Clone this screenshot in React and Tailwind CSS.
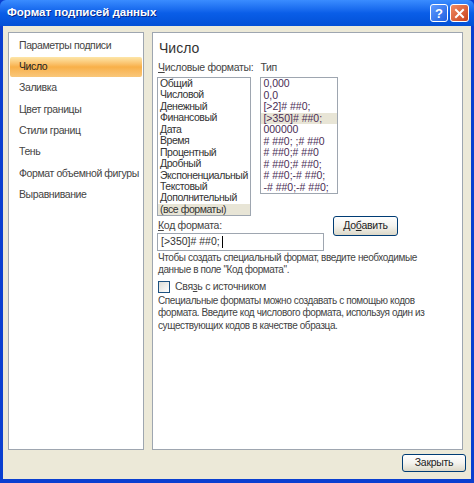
import React from "react";

const font = { fontFamily: '"Liberation Sans", Arial, sans-serif' };

const leftItems = [
  "Параметры подписи",
  "Число",
  "Заливка",
  "Цвет границы",
  "Стили границ",
  "Тень",
  "Формат объемной фигуры",
  "Выравнивание",
];

const categories = [
  "Общий",
  "Числовой",
  "Денежный",
  "Финансовый",
  "Дата",
  "Время",
  "Процентный",
  "Дробный",
  "Экспоненциальный",
  "Текстовый",
  "Дополнительный",
  "(все форматы)",
];

const types = [
  "0,000",
  "0,0",
  "[>2]# ##0;",
  "[>350]# ##0;",
  "000000",
  "# ##0; ;# ##0",
  "# ##0;# ##0",
  "# ##0;# ##0;",
  "# ##0;-# ##0;",
  "-# ##0;-# ##0;",
];

function XpButton({ children, className = "" }) {
  return (
    <div
      className={
        "flex items-center justify-center rounded-[3px] border border-[#003c74] bg-gradient-to-b from-[#ffffff] via-[#f4f3ee] to-[#dcd8c8] text-[10.5px] tracking-[-0.3px] text-[#222] whitespace-nowrap " +
        className
      }
    >
      {children}
    </div>
  );
}

export default function App() {
  return (
    <div
      className="w-[474px] h-[483px] bg-[#0a3fd0] flex flex-col overflow-hidden"
      style={font}
    >
      {/* Title bar */}
      <div className="h-[26px] shrink-0 flex items-center pl-[7px] pr-[5px] bg-gradient-to-b from-[#3a8cff] via-[#0a5ee8] to-[#0350d6] rounded-t-[6px]">
        <div className="text-white font-bold text-[11.5px] [text-shadow:1px_1px_0_#0b2a8a] flex-1 whitespace-nowrap">
          Формат подписей данных
        </div>
        <div className="flex gap-[2px] items-center">
          <div className="w-[18px] h-[18px] rounded-[3px] border border-white bg-gradient-to-br from-[#5f9bff] to-[#1f5fe0] flex items-center justify-center text-white font-bold text-[13px] leading-none">
            ?
          </div>
          <div className="w-[19px] h-[18px] rounded-[3px] border border-white bg-gradient-to-br from-[#f08a62] to-[#c8401a] flex items-center justify-center">
            <svg width="11" height="11" viewBox="0 0 11 11">
              <path d="M2 2 L9 9 M9 2 L2 9" stroke="white" strokeWidth="2" strokeLinecap="square" />
            </svg>
          </div>
        </div>
      </div>

      {/* Body */}
      <div className="flex-1 mx-[3px] mb-[4px] bg-[#ece9d8] flex flex-col pl-[5px] pr-[5px] pt-[6px]">
        <div className="flex gap-[8px] h-[418px]">
          {/* Left panel */}
          <div className="w-[136px] h-full bg-white border border-[#9ea6b0] pt-[2px] text-[10.5px] tracking-[-0.4px] text-[#444] whitespace-nowrap">
            {leftItems.map((it, i) => (
              <div key={it} className="h-[21.3px] flex items-center">
                {i === 1 ? (
                  <div className="mx-[1px] w-full h-[20px] flex items-center pl-[9px] rounded-[2px] bg-gradient-to-b from-[#fde6a8] via-[#f8b048] to-[#f9c77a] text-[#222]">
                    {it}
                  </div>
                ) : (
                  <div className="pl-[10px]">{it}</div>
                )}
              </div>
            ))}
          </div>

          {/* Right panel */}
          <div className="w-[311px] h-full bg-white border border-[#9ea6b0] pl-[4px] pt-[6px] text-[10.5px] tracking-[-0.3px] text-[#444] whitespace-nowrap">
            <div className="text-[14px] tracking-normal leading-[18px] text-[#333] pl-[2px]">Число</div>

            <div className="flex gap-[7px] mt-[4px]">
              <div className="flex flex-col">
                <div className="leading-[12px] pl-[1px]">
                  <span className="underline">Ч</span>исловые форматы:
                </div>
                <div className="mt-[4px] w-[94px] h-[139px] border border-[#9ea6b0] text-[#333] tracking-[-0.45px]">
                  {categories.map((c, i) => (
                    <div
                      key={c}
                      className={
                        "h-[11.45px] leading-[11.45px] pl-[2px] whitespace-nowrap " +
                        (i === 11 ? "bg-[#e8e5d6]" : "")
                      }
                    >
                      {c}
                    </div>
                  ))}
                </div>
              </div>
              <div className="flex flex-col">
                <div className="leading-[12px] pl-[0px]">Тип</div>
                <div className="mt-[4px] w-[78px] h-[117px] border border-[#9ea6b0] text-[#4a2c55] tracking-normal">
                  {types.map((t, i) => (
                    <div
                      key={t}
                      className={
                        "h-[11.5px] leading-[11.5px] pl-[2px] whitespace-pre " +
                        (i === 3 ? "bg-[#e8e5d6]" : "")
                      }
                    >
                      {t}
                    </div>
                  ))}
                </div>
              </div>
            </div>

            <div className="flex mt-[3px]">
              <div className="flex flex-col">
                <div className="leading-[12px] pl-[1px]">
                  <span className="underline">К</span>од формата:
                </div>
                <div className="mt-[2px] w-[167px] h-[18px] border border-[#9ea6b0] flex items-center pl-[3px] text-[#333] whitespace-pre tracking-normal">
                  [&gt;350]# ##0;
                  <span className="inline-block w-[1px] h-[12px] bg-black ml-[2px]" />
                </div>
              </div>
              <XpButton className="ml-[9px] w-[65px] h-[20px] mt-[-3px]">
                До<span className="underline">б</span>авить
              </XpButton>
            </div>

            <div className="mt-[1px] leading-[12px] pl-[1px] text-[10px] tracking-[-0.4px]">
              Чтобы создать специальный формат, введите необходимые
              <br />
              данные в поле "Код формата".
            </div>

            <div className="flex items-center mt-[3px] pl-[1px]">
              <div className="w-[12px] h-[12px] border border-[#1c5180] bg-gradient-to-br from-[#dcdcd6] to-[#ffffff]" />
              <div className="ml-[5px]">
                Свя<span className="underline">з</span>ь с источником
              </div>
            </div>

            <div className="mt-[0px] leading-[12.5px] pl-[1px] text-[10px] tracking-[-0.4px]">
              Специальные форматы можно создавать с помощью кодов
              <br />
              формата. Введите код числового формата, используя один из
              <br />
              существующих кодов в качестве образца.
            </div>
          </div>
        </div>

        <div className="flex justify-end mt-[4px] pr-[0px]">
          <XpButton className="w-[64px] h-[18px]">Закрыть</XpButton>
        </div>
      </div>
    </div>
  );
}
